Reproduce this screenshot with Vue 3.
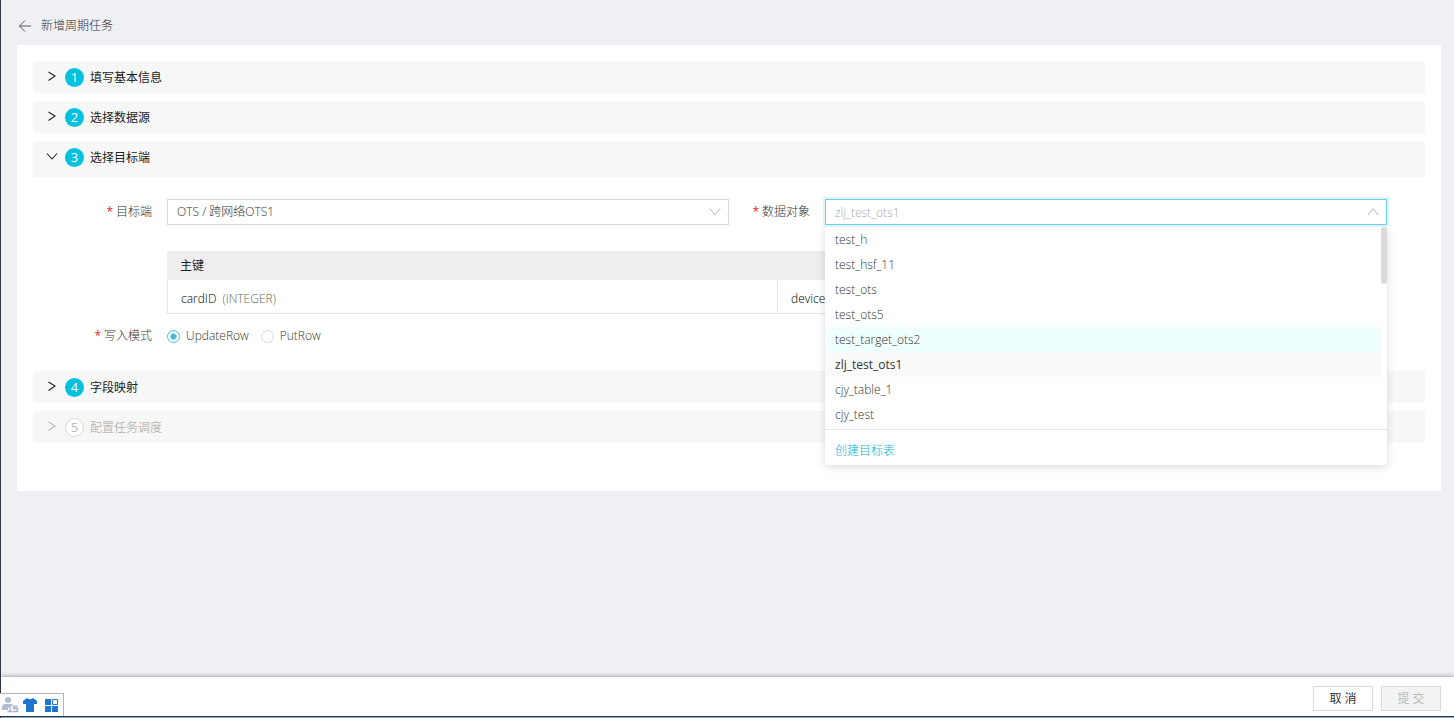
<template>
  <div class="page">
    <header class="page-head">
      <button type="button" class="back" aria-label="返回">
        <svg width="14" height="14" viewBox="0 0 14 14">
          <path d="M7 1.5L1.5 7L7 12.5M1.5 7H13" />
        </svg>
      </button>
      <h1>新增周期任务</h1>
    </header>

    <main class="card">
      <section v-for="step in steps" :key="step.no" class="step">
        <button
          type="button"
          class="step-head"
          :class="{ open: step.no === current }"
          :disabled="step.disabled"
          @click="toggle(step.no)"
        >
          <svg class="arrow" width="12" height="12" viewBox="0 0 12 12">
            <path v-if="step.no === current" d="M1 2.5L6 8L11 2.5" />
            <path v-else d="M2.5 1L9 5L2.5 9.5" />
          </svg>
          <span class="no">{{ step.no }}</span>
          <span class="title">{{ step.title }}</span>
        </button>

        <form v-if="step.no === 3 && current === 3" class="form" @submit.prevent>
          <label class="label" for="target">目标端</label>
          <div class="field">
            <select id="target" v-model="target" class="control">
              <option>OTS / 跨网络OTS1</option>
            </select>
            <svg class="caret" width="12" height="12" viewBox="0 0 12 12">
              <path d="M1 2.5L6 9L11 2.5" />
            </svg>
          </div>

          <label class="label" for="table-name">数据对象</label>
          <div class="field">
            <input
              id="table-name"
              v-model="keyword"
              class="control active"
              type="text"
              role="combobox"
              aria-expanded="true"
              autocomplete="off"
              :placeholder="selected"
            />
            <svg class="caret" width="12" height="12" viewBox="0 0 12 12">
              <path d="M1 9L6 2.5L11 9" />
            </svg>
            <div class="dropdown">
              <ul class="options" role="listbox">
                <li
                  v-for="name in tables"
                  :key="name"
                  role="option"
                  :aria-selected="name === selected"
                  :class="{ hover: name === hovered, selected: name === selected }"
                  @mouseenter="hovered = name"
                  @click="selected = name"
                >
                  {{ name }}
                </li>
              </ul>
              <span class="thumb"></span>
              <div class="create"><a href="#">创建目标表</a></div>
            </div>
          </div>

          <table class="keys">
            <thead>
              <tr>
                <th colspan="2">主键</th>
              </tr>
            </thead>
            <tbody>
              <tr>
                <td v-for="k in keys" :key="k.name">
                  {{ k.name }}<span v-if="k.type" class="type">({{ k.type }})</span>
                </td>
              </tr>
            </tbody>
          </table>

          <span id="mode-label" class="label">写入模式</span>
          <div class="radios" role="radiogroup" aria-labelledby="mode-label">
            <label v-for="m in modes" :key="m">
              <input v-model="mode" type="radio" name="mode" :value="m" />
              <span>{{ m }}</span>
            </label>
          </div>
        </form>
      </section>
    </main>

    <footer class="footer">
      <button type="button" class="btn">取 消</button>
      <button type="button" class="btn" disabled>提 交</button>
    </footer>
    <div class="taskbar"></div>

    <!-- 输入法工具条 -->
    <div class="ime">
      <svg width="17" height="16" viewBox="0 0 17 16">
        <circle cx="6" cy="3" r="3" fill="#b0bdd2" />
        <path d="M0 13V10Q0 7 3 7H9Q11 7 11 9H6V13Z" fill="#b0bdd2" />
        <path
          d="M6 9.5H8V14M5.5 14.5H10.5M15.5 9.5H11.5V11.5H15.5V14.5H11"
          fill="none"
          stroke="#a3b2ca"
          stroke-width="1.4"
        />
      </svg>
      <svg width="18" height="14" viewBox="0 0 18 14">
        <path
          d="M4 0Q7 2.4 10 0L14 3V6H11V14H3V6H0V3Z"
          fill="#1e74ce"
        />
      </svg>
      <svg width="13" height="13" viewBox="0 0 13 13">
        <path d="M0 0H6V6H0ZM0 7H6V13H0ZM7 7H13V13H7Z" fill="#1e74ce" />
        <path d="M7.5 0.5H12.5V5.5H7.5Z" fill="#fff" stroke="#1e74ce" />
      </svg>
    </div>
  </div>
</template>

<script setup>
import { ref } from "vue";

// 步骤
const steps = [
  { no: 1, title: "填写基本信息" },
  { no: 2, title: "选择数据源" },
  { no: 3, title: "选择目标端" },
  { no: 4, title: "字段映射" },
  { no: 5, title: "配置任务调度", disabled: true },
];
const current = ref(3);

const toggle = (no) => {
  current.value = current.value === no ? 0 : no;
};

// 目标端
const target = ref("OTS / 跨网络OTS1");

// 数据对象
const keyword = ref("");
const selected = ref("zlj_test_ots1");
const hovered = ref("test_target_ots2");
const tables = [
  "test_h",
  "test_hsf_11",
  "test_ots",
  "test_ots5",
  "test_target_ots2",
  "zlj_test_ots1",
  "cjy_table_1",
  "cjy_test",
];

// 主键
const keys = [{ name: "cardID", type: "INTEGER" }, { name: "deviceI" }];

// 写入模式
const modes = ["UpdateRow", "PutRow"];
const mode = ref("UpdateRow");
</script>

<style>
body {
  margin: 0;
}
</style>

<style scoped>
.page {
  position: relative;
  display: flex;
  flex-direction: column;
  box-sizing: border-box;
  min-height: 100vh;
  border-left: 1px solid #343a46;
  background: #eff0f4;
  color: #333;
  font: 300 12px/20px "Open Sans", "Noto Sans CJK SC", sans-serif;
}

button,
input,
select {
  font: inherit;
  color: inherit;
}

svg {
  flex: none;
}

/* 标题 */
.page-head {
  display: flex;
  align-items: center;
  gap: 8px;
  padding: 16px 16px 9px;
}

.page-head h1 {
  margin: 0;
  font-size: 12px;
  font-weight: 300;
}

.back {
  display: flex;
  padding: 1px;
  border: 0;
  background: none;
  color: #595959;
}

.back path,
.arrow path,
.caret path {
  fill: none;
  stroke: currentColor;
}

.arrow path {
  stroke-width: 1.1;
}

/* 步骤面板 */
.card {
  display: flex;
  flex-direction: column;
  gap: 8px;
  margin: 0 13px 0 16px;
  padding: 16px 16px 48px;
  background: #fff;
}

.step-head {
  display: flex;
  align-items: center;
  box-sizing: border-box;
  width: 100%;
  height: 32px;
  padding: 0 13px;
  border: 0;
  border-radius: 3px;
  background: #f7f7f7;
  color: #222;
  font-weight: 400;
  text-align: left;
}

.step-head.open {
  height: 36px;
  padding-bottom: 4px;
  border-radius: 3px 3px 0 0;
}

.step-head:disabled {
  color: #bbb;
}

.no {
  box-sizing: border-box;
  width: 19px;
  height: 19px;
  margin: 0 6px 0 7px;
  border-radius: 50%;
  background: #00c1de;
  color: #fff;
  font-size: 13px;
  line-height: 19px;
  text-align: center;
}

.title {
  padding-top: 2px;
}

.step-head:disabled .no {
  border: 1px solid #d9d9d9;
  background: #fff;
  color: #bbb;
  line-height: 17px;
}

/* 表单 */
.form {
  display: grid;
  grid-template-columns: 134px 1fr 96px 1fr;
  align-items: center;
  padding: 22px 38px 17px 0;
}

.label {
  padding-right: 15px;
  text-align: right;
  white-space: nowrap;
}

.label::before {
  content: "*";
  margin-right: 3px;
  color: #f5222d;
  font-weight: 400;
}

.field {
  position: relative;
}

.control {
  display: block;
  box-sizing: border-box;
  width: 100%;
  height: 26px;
  padding: 0 30px 0 9px;
  border: 1px solid #d9d9d9;
  border-radius: 0;
  outline: 0;
  background: #fff;
  appearance: none;
}

.control.active {
  border-color: #6fcfe4;
  box-shadow: 0 0 0 2px #dff4f9;
}

.control::placeholder {
  color: #aaa;
  opacity: 1;
}

.caret {
  position: absolute;
  top: 7px;
  right: 8px;
  color: #b5b5b5;
  pointer-events: none;
}

.dropdown {
  position: absolute;
  top: 28px;
  left: 0;
  z-index: 10;
  width: 100%;
  border-radius: 0 0 2px 2px;
  background: #fff;
  box-shadow: 0 2px 8px rgba(0, 0, 0, 0.15);
  clip-path: inset(0 -12px -12px -12px);
}

.options {
  margin: 0;
  padding: 0 6px 2px 0;
  list-style: none;
}

.options li {
  padding: 0 10px;
  line-height: 25px;
}

.options li.selected {
  background: #fafafa;
  font-weight: 400;
}

.options li.hover {
  background: #efffff;
}

.thumb {
  position: absolute;
  top: 0;
  right: 0;
  width: 6px;
  height: 57px;
  border-radius: 3px;
  background: #dadada;
}

.create {
  padding: 11px 10px 4px;
  border-top: 1px solid #e6e6e6;
}

.create a {
  color: #00b6d8;
  text-decoration: none;
}

.keys {
  grid-column: 2 / -1;
  width: 100%;
  margin: 26px 0 12px;
  border-spacing: 0;
  table-layout: fixed;
  color: #000;
}

.keys th {
  height: 29px;
  padding: 0 13px;
  background: #eee;
  color: #222;
  font-weight: 400;
  text-align: left;
}

.keys td {
  height: 29px;
  padding: 4px 13px 0;
  border: 1px solid #e6e6e6;
  border-width: 0 0 1px 1px;
}

.keys td:last-child {
  border-right-width: 1px;
}

.type {
  margin-left: 6px;
  color: #666;
}

.radios {
  display: flex;
  gap: 12px;
}

.radios label {
  display: flex;
  align-items: center;
  gap: 6px;
}

.radios input {
  width: 13px;
  height: 13px;
  margin: 0;
  border: 1px solid #d9d9d9;
  border-radius: 50%;
  background: #fff;
  appearance: none;
}

.radios input:checked {
  border-color: #4dbbdb;
  background: radial-gradient(circle, #3fb5d8 2px, #fff 4px);
}

/* 底部操作栏 */
.footer {
  display: flex;
  justify-content: flex-end;
  gap: 8px;
  margin-top: auto;
  padding: 9px 13px 5px 0;
  background: #fff;
  box-shadow: 0 -1px 4px rgba(0, 0, 0, 0.3);
}

.btn {
  box-sizing: border-box;
  width: 60px;
  height: 25px;
  padding: 0;
  border: 1px solid #d9d9d9;
  background: #fff;
  color: #333;
  font-weight: 400;
}

.btn:disabled {
  background: #f3f3f3;
  color: #bbb;
}

.taskbar {
  height: 2px;
  box-sizing: border-box;
  border-top: 1px solid #26384a;
  background: #86a9c2;
}

.ime {
  position: absolute;
  bottom: 2px;
  left: -1px;
  display: flex;
  align-items: center;
  gap: 4px;
  padding: 3px 5px 3px 2px;
  border: 1px solid #b5b5bd;
  border-width: 1px 1px 0 0;
  background: #fff;
}
</style>
